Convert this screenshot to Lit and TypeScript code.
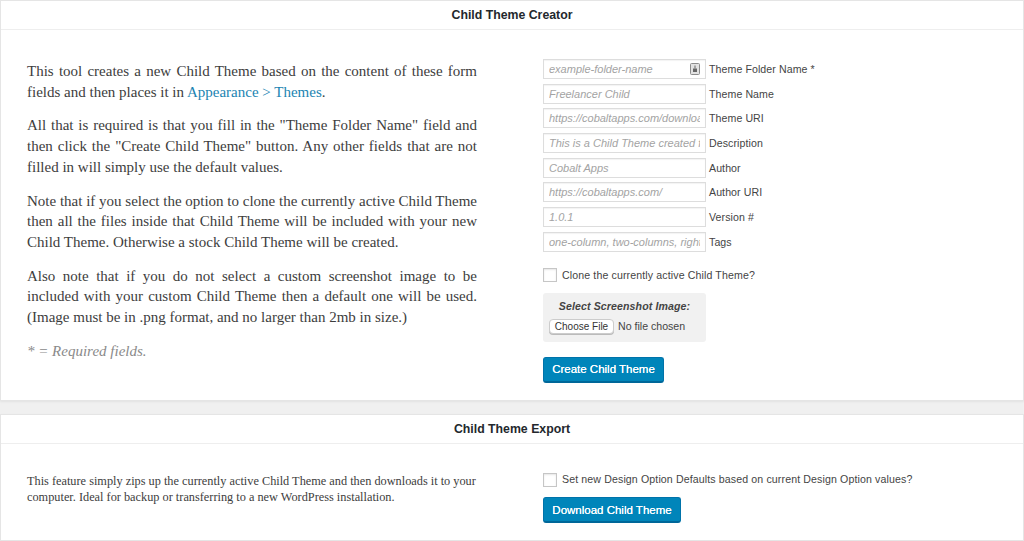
import { LitElement, html, css } from "lit";
import { customElement } from "lit/decorators.js";

const fields = [
  ["example-folder-name", "Theme Folder Name *", true],
  ["Freelancer Child", "Theme Name", false],
  ["https://cobaltapps.com/downloads/freelancer-child", "Theme URI", false],
  ["This is a Child Theme created for the Freelancer", "Description", false],
  ["Cobalt Apps", "Author", false],
  ["https://cobaltapps.com/", "Author URI", false],
  ["1.0.1", "Version #", false],
  ["one-column, two-columns, right-sidebar", "Tags", false],
] as const;

@customElement("app-root")
export class AppRoot extends LitElement {
  static styles = css`
    :host { display: block; width: 1024px; height: 541px; overflow: hidden; background: #f0f0f0; font-family: "Liberation Sans", Arial, sans-serif; color: #444; }
    .card { background: #fff; border: 1px solid #e5e5e5; box-shadow: 0 1px 2px rgba(0,0,0,.06); }
    .first { height: 401px; box-sizing: border-box; }
    .second { margin-top: 13px; height: 127px; box-sizing: border-box; }
    .head { height: 29px; box-sizing: border-box; border-bottom: 1px solid #eee; display: flex; align-items: center; justify-content: center; font-size: 12.3px; font-weight: 700; color: #23282d; }
    .first .body { display: grid; grid-template-columns: 450px 1fr; column-gap: 66px; padding: 31px 0 0 26px; }
    .copy p { margin: 0 0 13px; font-family: "Liberation Serif", Georgia, serif; font-size: 15px; line-height: 20.7px; text-align: justify; color: #3d3d3d; }
    .copy p.req { font-style: italic; color: #8a8a8a; text-align: left; }
    a { color: #1b84b2; text-decoration: none; }
    .rows { display: flex; flex-direction: column; gap: 4.7px; margin-top: -2px; }
    .row { display: flex; align-items: center; gap: 3px; height: 20px; font-size: 10.6px; letter-spacing: .08px; }
    .input { width: 163px; height: 20px; box-sizing: border-box; border: 1px solid #ddd; box-shadow: inset 0 1px 1px rgba(0,0,0,.05); padding: 0 5px; display: flex; align-items: center; color: #a3a3a3; font-style: italic; font-size: 11px; letter-spacing: 0; overflow: hidden; white-space: nowrap; }
    .ph { overflow: hidden; flex: 1; }
    .key { flex: none; width: 10px; height: 12px; margin-left: 4px; display: block; }
    .clone { display: flex; align-items: center; gap: 5px; margin-top: 16px; font-size: 10.6px; letter-spacing: .12px; }
    .cb { width: 14px; height: 14px; box-sizing: border-box; border: 1px solid #c6c6c6; box-shadow: inset 0 1px 2px rgba(0,0,0,.1); background: #fff; flex: none; }
    .shot { margin-top: 11px; width: 163px; height: 49px; box-sizing: border-box; background: #f1f1f1; border-radius: 3px; padding: 7px 6px 0; font-size: 10.6px; }
    .shot b { display: block; text-align: center; font-style: italic; font-weight: 700; color: #444; line-height: 13px; letter-spacing: .1px; }
    .file { display: flex; align-items: center; gap: 4px; margin-top: 6px; }
    .choose { width: 65px; height: 15px; box-sizing: border-box; border: 1px solid #ccc; border-radius: 4px; background: #fff; box-shadow: 0 1px 0 #bbb; display: flex; align-items: center; justify-content: center; font-size: 10px; color: #333; }
    .btn { display: flex; align-items: center; justify-content: center; height: 26px; box-sizing: border-box; background: #0085ba; border: 1px solid #0073aa; border-bottom: 2px solid #006799; border-radius: 3px; color: #fff; font-size: 11.5px; text-shadow: 0 0 .5px #fff; }
    .create { width: 121px; margin-top: 15px; }
    .second .body { display: grid; grid-template-columns: 450px 1fr; column-gap: 66px; padding: 29px 0 0 26px; }
    .second p { margin: 0; font-family: "Liberation Serif", Georgia, serif; font-size: 12.3px; line-height: 16.4px; color: #3d3d3d; }
    .second .clone { margin-top: 0; align-items: flex-start; }
    .second .clone span:last-child { line-height: 12px; }
    .download { width: 138px; margin-top: 10px; }
  `;

  render() {
    return html`
      <section class="card first">
        <div class="head">Child Theme Creator</div>
        <div class="body">
          <div class="copy">
            <p>This tool creates a new Child Theme based on the content of these form fields and then places it in <a>Appearance &gt; Themes</a>.</p>
            <p>All that is required is that you fill in the "Theme Folder Name" field and then click the "Create Child Theme" button. Any other fields that are not filled in will simply use the default values.</p>
            <p>Note that if you select the option to clone the currently active Child Theme then all the files inside that Child Theme will be included with your new Child Theme. Otherwise a stock Child Theme will be created.</p>
            <p>Also note that if you do not select a custom screenshot image to be included with your custom Child Theme then a default one will be used. (Image must be in .png format, and no larger than 2mb in size.)</p>
            <p class="req">* = Required fields.</p>
          </div>
          <div>
            <div class="rows">
              ${fields.map(([ph, label, key]) => html`
                <div class="row">
                  <div class="input"><span class="ph">${ph}</span>${key ? html`<svg class="key" viewBox="0 0 10 12"><rect x=".5" y=".5" width="9" height="11" rx="1" fill="#e2e2e2" stroke="#8c8c8c"/><path d="M5 2.5v3" stroke="#666" fill="none"/><rect x="3" y="5.5" width="4" height="3.5" fill="#666"/></svg>` : ""}</div>
                  <span>${label}</span>
                </div>`)}
            </div>
            <div class="clone"><span class="cb"></span><span>Clone the currently active Child Theme?</span></div>
            <div class="shot">
              <b>Select Screenshot Image:</b>
              <div class="file"><span class="choose">Choose File</span><span>No file chosen</span></div>
            </div>
            <div class="btn create">Create Child Theme</div>
          </div>
        </div>
      </section>
      <section class="card second">
        <div class="head">Child Theme Export</div>
        <div class="body">
          <p>This feature simply zips up the currently active Child Theme and then downloads it to your computer. Ideal for backup or transferring to a new WordPress installation.</p>
          <div>
            <div class="clone"><span class="cb"></span><span>Set new Design Option Defaults based on current Design Option values?</span></div>
            <div class="btn download">Download Child Theme</div>
          </div>
        </div>
      </section>
    `;
  }
}
